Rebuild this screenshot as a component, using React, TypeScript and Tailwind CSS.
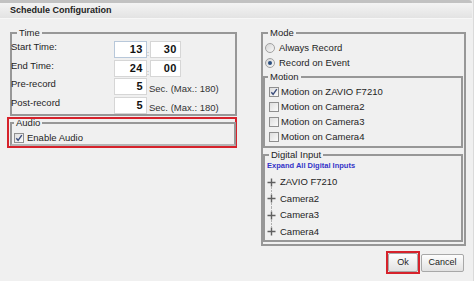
import React from "react";

function Check({ checked }: { checked?: boolean }) {
  return (
    <span className="w-[10px] h-[10px] border border-[#8f8f8f] bg-linear-to-br from-[#dedede] to-[#fafafa] flex items-center justify-center shrink-0">
      {checked && (
        <svg width="8" height="8" viewBox="0 0 8 8">
          <path d="M1.3 4.3 L3.1 6.3 L6.8 1.2" stroke="#3b4d7c" strokeWidth="1.4" fill="none" />
        </svg>
      )}
    </span>
  );
}

function Radio({ on }: { on?: boolean }) {
  return (
    <span className="w-[10px] h-[10px] rounded-full border border-[#a0a0a0] bg-linear-to-br from-[#d6d6d6] to-[#f8f8f8] flex items-center justify-center shrink-0">
      {on && <span className="w-[4px] h-[4px] rounded-full bg-[#2b4f7f]" />}
    </span>
  );
}

function TreeRow({ label, first, last }: { label: string; first?: boolean; last?: boolean }) {
  return (
    <div className="h-[16.5px] flex items-stretch">
      <div className="w-[9px] ml-[2px] flex flex-col items-center">
        <span className={"flex-1 w-0 " + (first ? "" : "border-l border-dotted border-[#b0b0b0]")} />
        <svg width="9" height="9" viewBox="0 0 9 9" className="shrink-0">
          <path d="M4.5 0.5v8M0.5 4.5h8" stroke="#606060" strokeWidth="1.4" />
        </svg>
        <span className={"flex-1 w-0 " + (last ? "" : "border-l border-dotted border-[#b0b0b0]")} />
      </div>
      <span className="ml-[4px] self-center">{label}</span>
    </div>
  );
}

function NumBox({ v, focus, w }: { v: string; focus?: boolean; w: string }) {
  return (
    <div
      className={
        "h-[17px] bg-white border flex items-center justify-end pr-[3px] text-[11px] font-bold tracking-[0.5px] text-[#111] " +
        w +
        (focus ? " border-[#b8c8da]" : " border-[#d6d6d6]")
      }
    >
      {v}
    </div>
  );
}

export default function App() {
  return (
    <div className="w-[474px] h-[281px] bg-[#f0f0f0] overflow-hidden font-['Liberation_Sans',Arial,sans-serif] text-[#1e1e1e] border-r border-[#dadada]">
      <div className="h-[19px] border-t-[3px] border-[#c2c2c2] bg-linear-to-b from-[#f4f4f4] to-[#e3e3e3] flex items-center pl-[10px] text-[9px] font-bold text-[#222] mr-[1px] rounded-tr-[3px] border-b border-b-[#f7f7f7]">
        Schedule Configuration
      </div>
      <div className="flex pl-[10px] pt-[8px]">
        {/* Left column */}
        <div className="w-[227px] flex flex-col">
          <fieldset className="border-2 border-[#979797] h-[89px]">
            <legend className="ml-[5px] px-[2px] text-[9.5px] leading-[12px]">Time</legend>
            <div className="pt-[2px] flex flex-col gap-[1.5px] text-[9.5px]">
              <div className="flex items-start">
                <span className="w-[103px] leading-[12px] -ml-[1px]">Start Time:</span>
                <NumBox v="13" focus w="w-[33px]" />
                <span className="w-[3px] self-end text-[7px] leading-[9px] text-[#888]">:</span>
                <NumBox v="30" w="w-[31px]" />
              </div>
              <div className="flex items-start">
                <span className="w-[103px] leading-[12px] -ml-[1px]">End Time:</span>
                <NumBox v="24" w="w-[33px]" />
                <span className="w-[3px] self-end text-[7px] leading-[9px] text-[#888]">:</span>
                <NumBox v="00" w="w-[31px]" />
              </div>
              <div className="flex items-start">
                <span className="w-[103px] leading-[12px] -ml-[1px]">Pre-record</span>
                <NumBox v="5" w="w-[33px]" />
                <span className="ml-[2px] self-end leading-[12px] text-[#333]">Sec. (Max.: 180)</span>
              </div>
              <div className="flex items-start">
                <span className="w-[103px] leading-[12px] -ml-[1px]">Post-record</span>
                <NumBox v="5" w="w-[33px]" />
                <span className="ml-[2px] self-end leading-[12px] text-[#333]">Sec. (Max.: 180)</span>
              </div>
            </div>
          </fieldset>
          <div className="mt-[1px] -ml-[3px] w-[230px] border-2 border-[#d6222b]">
            <fieldset className="ml-[1px] w-[226px] border-2 border-[#979797] border-b-[#b5b5b5]">
              <legend className="ml-[2px] px-[2px] text-[9.5px] leading-[8px]">Audio</legend>
              <div className="mt-[5px] h-[12px] flex items-center ml-[2px] text-[9.5px]">
                <Check checked />
                <span className="ml-[3px]">Enable Audio</span>
              </div>
            </fieldset>
          </div>
        </div>

        {/* Right column */}
        <div className="ml-[24px] w-[205px] flex flex-col text-[9.5px]">
          <fieldset className="border-2 border-[#979797] pb-[2px]">
            <legend className="ml-[5px] px-[2px] text-[9.5px] leading-[12px]">Mode</legend>
            <div className="pt-[1.5px]">
              <div className="h-[15px] flex items-center ml-[2px]">
                <Radio />
                <span className="ml-[4px]">Always Record</span>
              </div>
              <div className="h-[15px] flex items-center ml-[2px]">
                <Radio on />
                <span className="ml-[4px]">Record on Event</span>
              </div>
            </div>
            <fieldset className="mt-[0.5px] mr-[1px] border-2 border-[#979797]">
              <legend className="ml-[3px] px-[2px] text-[9.5px] leading-[12px]">Motion</legend>
              <div className="pt-[1.5px] pb-[1.5px]">
                {[
                  ["Motion on ZAVIO F7210", true],
                  ["Motion on Camera2", false],
                  ["Motion on Camera3", false],
                  ["Motion on Camera4", false],
                ].map(([t, c]) => (
                  <div key={t as string} className="h-[15px] flex items-center ml-[4px]">
                    <Check checked={c as boolean} />
                    <span className="ml-[2px]">{t as string}</span>
                  </div>
                ))}
              </div>
            </fieldset>
            <fieldset className="mt-[1px] mr-[1px] border-2 border-[#979797]">
              <legend className="ml-[4px] px-[2px] text-[9.5px] leading-[12px]">Digital Input</legend>
              <div className="ml-[2px] h-[10px] leading-[10px] text-[7.5px] font-bold text-[#3434c8]">
                Expand All Digital Inputs
              </div>
              <div className="mt-[3px]">
                <TreeRow label="ZAVIO F7210" first />
                <TreeRow label="Camera2" />
                <TreeRow label="Camera3" />
                <TreeRow label="Camera4" last />
              </div>
            </fieldset>
          </fieldset>
          <div className="mt-[5px] mr-[2px] flex justify-end items-center gap-[1px]">
            <span className="border-2 border-[#d6222b] flex">
              <button className="h-[19px] w-[30px] border border-[#a8a8a8] rounded-[2px] bg-linear-to-b from-[#fdfdfd] to-[#e2e2e2] text-[9px] text-[#222]">
                Ok
              </button>
            </span>
            <button className="h-[18px] w-[43px] border border-[#a8a8a8] rounded-[2px] bg-linear-to-b from-[#fdfdfd] to-[#e2e2e2] text-[9px] text-[#222]">
              Cancel
            </button>
          </div>
        </div>
      </div>
    </div>
  );
}
